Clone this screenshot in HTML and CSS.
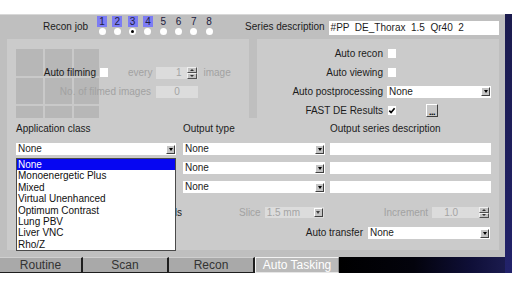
FILE: index.html
```html
<!DOCTYPE html>
<html>
<head>
<meta charset="utf-8">
<link rel="stylesheet" href="styles.css">
</head>
<body>
<div class="screen">
  <div class="main">
    <div class="window">
      <div class="header">
        <span class="recon-lbl">Recon job</span>
        <div class="jobs">
          <div class="job"><span class="num on">1</span><span class="dot"></span></div>
          <div class="job"><span class="num on">2</span><span class="dot"></span></div>
          <div class="job"><span class="num on">3</span><span class="dot sel-dot"></span></div>
          <div class="job"><span class="num on">4</span><span class="dot"></span></div>
          <div class="job"><span class="num">5</span><span class="dot"></span></div>
          <div class="job"><span class="num">6</span><span class="dot"></span></div>
          <div class="job"><span class="num">7</span><span class="dot"></span></div>
          <div class="job"><span class="num">8</span><span class="dot"></span></div>
        </div>
        <span class="series-lbl">Series description</span>
        <div class="field series">#PP  DE_Thorax  1.5  Qr40  2</div>
      </div>

      <div class="panels">
        <div class="panel filming">
          <div class="thumb">
            <i></i><i></i><i></i><i></i><i></i><i></i><i></i><i></i><i></i>
          </div>
          <div class="film-ctrls">
            <div class="frow">
              <span class="flbl">Auto filming</span>
              <span class="check"></span>
              <span class="dim every">every</span>
              <div class="field dis spinfield"><span class="spinval">1</span><span class="spin"><i class="up"></i><i class="down"></i></span></div>
              <span class="dim image">image</span>
            </div>
            <div class="frow">
              <span class="flbl wide dim">No. of filmed images</span>
              <div class="field dis numfield">0</div>
            </div>
          </div>
        </div>

        <div class="panel auto">
          <div class="arow"><span class="albl">Auto recon</span><span class="check"></span></div>
          <div class="arow"><span class="albl">Auto viewing</span><span class="check"></span></div>
          <div class="arow"><span class="albl">Auto postprocessing</span><div class="sel post"><span>None</span><span class="arr"></span></div></div>
          <div class="arow"><span class="albl">FAST DE Results</span><span class="check"><svg width="8" height="9" viewBox="0 0 8 9"><path d="M1.3 4.6 L3.1 6.6 L6.6 2.2" stroke="#000" stroke-width="1.6" fill="none"/></svg></span><span class="more">...</span></div>
        </div>
      </div>

      <div class="panel tasks">
        <div class="tgrid">
          <span class="th">Application class</span>
          <span class="th">Output type</span>
          <span class="th">Output series description</span>

          <div class="cell"><div class="sel appsel"><span>None</span><span class="arr"></span></div></div>
          <div class="cell"><div class="sel outsel"><span>None</span><span class="arr"></span></div></div>
          <div class="cell"><div class="field desc"></div></div>

          <div class="cell"></div>
          <div class="cell"><div class="sel outsel"><span>None</span><span class="arr"></span></div></div>
          <div class="cell"><div class="field desc"></div></div>

          <div class="cell"></div>
          <div class="cell"><div class="sel outsel"><span>None</span><span class="arr"></span></div></div>
          <div class="cell"><div class="field desc"></div></div>
        </div>

        <div class="srow">
          <span class="hid-lbl">Kernels</span>
          <span class="dim slice-lbl">Slice</span>
          <div class="sel dis slicesel"><span>1.5 mm</span><span class="arr"></span></div>
          <span class="dim inc-lbl">Increment</span>
          <div class="field dis incfield"><span class="incval">1.0</span><span class="spin"><i class="up"></i><i class="down"></i></span></div>
        </div>

        <div class="trow">
          <span class="tr-lbl">Auto transfer</span>
          <div class="sel trsel"><span>None</span><span class="arr"></span></div>
        </div>

        <div class="droplist">
          <div class="opt hl">None</div>
          <div class="opt">Monoenergetic Plus</div>
          <div class="opt">Mixed</div>
          <div class="opt">Virtual Unenhanced</div>
          <div class="opt">Optimum Contrast</div>
          <div class="opt">Lung PBV</div>
          <div class="opt">Liver VNC</div>
          <div class="opt">Rho/Z</div>
        </div>
      </div>
    </div>

    <div class="tabs">
      <div class="tab t1">Routine</div>
      <div class="tab t2">Scan</div>
      <div class="tab t3">Recon</div>
      <div class="tab active">Auto Tasking</div>
      <div class="tabfill"></div>
    </div>
  </div>
  <div class="strip"></div>
</div>
</body>
</html>
```
FILE: styles.css
```css
* { box-sizing: border-box; }
html, body { margin: 0; padding: 0; }
body {
  width: 512px; height: 288px; overflow: hidden;
  background: #ffffff;
  font-family: "Liberation Sans", Arial, sans-serif;
  font-size: 10px; color: #1c1c1c;
}
.screen { margin-top: 14px; height: 259px; display: flex; }
.main { width: 505px; display: flex; flex-direction: column; }
.strip { width: 7px; background: linear-gradient(180deg, #1b1b4e 0%, #22226a 100%); }

.window {
  height: 243px; background: #bfbfbf;
  border-top: 1px solid #d8d8d8;
  padding: 0 6px 0 7px;
}

/* header */
.header { height: 24px; display: flex; align-items: flex-start; }
.recon-lbl { margin: 6px 0 0 36px; line-height: 12px; }
.jobs { display: flex; gap: 5.3px; margin: 1px 0 0 9px; }
.job { width: 10px; display: flex; flex-direction: column; align-items: center; }
.num { width: 10px; height: 11px; line-height: 11px; text-align: center; color: #202040; }
.num.on { background: #7c7cf4; }
.dot { width: 7px; height: 7px; border-radius: 50%; background: #ffffff; margin-top: 1px; display: flex; align-items: center; justify-content: center; }
.sel-dot::after { content: ""; width: 3px; height: 3px; border-radius: 50%; background: #000; }
.series-lbl { margin: 6px 0 0 31px; line-height: 12px; }
.field { background: #ffffff; }
.series { margin: 6px 0 0 4px; width: 170px; height: 14px; line-height: 14px; padding-left: 2px; white-space: pre; }

/* panels */
.panels { height: 79px; display: flex; gap: 8px; }
.panel { background: #cbcbcb; }
.filming { width: 242px; display: grid; overflow: hidden; }
.filming > * { grid-area: 1 / 1; }
.thumb {
  align-self: start; justify-self: start;
  margin: 10px 0 0 9px; width: 83px; height: 69px;
  display: grid; grid-template-columns: 27px 27px 25px; grid-template-rows: 27px 26px 12px;
  gap: 2px; background: #c9c9c9;
}
.thumb i { background: #b7b7b7; }
.film-ctrls { padding-top: 24px; }
.frow { height: 19px; display: flex; align-items: center; }
.flbl { width: 89px; text-align: right; line-height: 12px; }
.flbl.wide { width: 144px; }
.check { width: 8px; height: 9px; background: #ffffff; margin-left: 4px; display: flex; }
.dim { color: #a2a2a2; }
.every { margin-left: 20px; }
.field.dis { background: #dcdcdc; color: #a4a4a4; }
.spinfield { margin-left: 4px; width: 42px; height: 12px; display: flex; align-items: center; justify-content: flex-end; }
.spinval { margin-right: 6px; }
.spin { width: 10px; height: 12px; display: flex; flex-direction: column; margin-right: 1px; }
.spin i { flex: 1; background: #c2c2c2; border-top: 1px solid #f0f0f0; border-left: 1px solid #f0f0f0; border-right: 1px solid #505050; border-bottom: 1px solid #505050; display: flex; align-items: center; justify-content: center; }
.spin .up::after { content: ""; border-left: 2px solid transparent; border-right: 2px solid transparent; border-bottom: 2px solid #303030; }
.spin .down::after { content: ""; border-left: 2px solid transparent; border-right: 2px solid transparent; border-top: 2px solid #303030; }
.image { margin-left: 5px; }
.numfield { margin-left: 5px; width: 42px; height: 12px; line-height: 12px; text-align: center; }

.auto { flex: 1; padding-top: 5px; }
.arow { height: 19px; display: flex; align-items: center; }
.albl { width: 126px; text-align: right; line-height: 12px; }
.auto .check { margin-left: 5px; }
.sel { height: 12px; background: #ffffff; display: flex; align-items: center; justify-content: space-between; padding-left: 2px; line-height: 12px; }
.arr {
  width: 9px; height: 9px; margin-right: 1px; background: #c4c4c4;
  border-top: 1px solid #ffffff; border-left: 1px solid #ffffff;
  border-right: 1px solid #404040; border-bottom: 1px solid #404040;
  display: flex; align-items: center; justify-content: center;
}
.arr::after { content: ""; border-left: 2.5px solid transparent; border-right: 2.5px solid transparent; border-top: 3px solid #000; }
.post { margin-left: 4px; width: 104px; }
.more {
  margin-left: 30px; width: 12px; height: 13px; background: #c8c8c8;
  border-top: 1px solid #ffffff; border-left: 1px solid #ffffff;
  border-right: 1px solid #404040; border-bottom: 1px solid #404040;
  font-size: 9px; line-height: 14px; text-align: center; color: #000; font-weight: bold; letter-spacing: -0.5px;
}

/* tasks panel */
.tasks { height: 132px; position: relative; padding: 5px 8px 0 9px; }
.tgrid { display: grid; grid-template-columns: 167px 147px 161px; grid-template-rows: 13px 12px 12px 12px; row-gap: 7px; }
.th { line-height: 12px; }
.cell { display: flex; }
.appsel { width: 160px; }
.outsel { width: 142px; }
.desc { width: 161px; height: 12px; }

.srow { margin-top: 14px; height: 11px; display: flex; align-items: center; }
.hid-lbl { width: 166px; text-align: right; white-space: nowrap; overflow: hidden; line-height: 12px; }
.slice-lbl { margin-left: 57px; }
.slicesel { margin-left: 4px; width: 59px; height: 11px; background: #dcdcdc; color: #a4a4a4; }
.slicesel .arr::after { border-top-color: #404040; }
.inc-lbl { margin-left: 60px; }
.incfield { margin-left: 4px; width: 58px; height: 11px; display: flex; align-items: center; justify-content: space-between; padding-left: 12px; }
.incfield .spin { height: 11px; }

.trow { margin-top: 9px; height: 12px; display: flex; align-items: center; justify-content: flex-end; padding-right: 1px; }
.tr-lbl { margin-right: 5px; line-height: 12px; }
.trsel { width: 122px; }

.droplist {
  position: absolute; left: 9px; top: 40px; width: 160px; height: 93px;
  background: #ffffff; border: 1px solid #4a4a4a;
}
.opt { height: 11.375px; line-height: 11.375px; padding-left: 1px; white-space: nowrap; color: #101010; }
.opt.hl { background: #0606f2; color: #ffffff; }

/* tabs */
.tabs { height: 16px; display: flex; font-size: 12px; }
.tab {
  height: 16px; line-height: 14px; text-align: center; color: #333333;
  background: #a9a9a9; border-top: 1px solid #cfcfcf;
  border-right: 2px solid #1e1e1e; border-bottom: 1px solid #1e1e1e;
}
.t1 { width: 83px; }
.t2 { width: 86px; }
.t3 { width: 86px; }
.tab.active { width: 84px; background: #bababa; color: #ffffff; border-top: 1px solid #f2f2f2; border-left: 1px solid #f2f2f2; border-right: 1px solid #8a8a8a; border-bottom: 1px solid #e6e6e6; }
.tabfill { flex: 1; background: linear-gradient(90deg, #000000 0%, #03030c 45%, #0f0f38 80%, #1b1b4e 100%); }
```
